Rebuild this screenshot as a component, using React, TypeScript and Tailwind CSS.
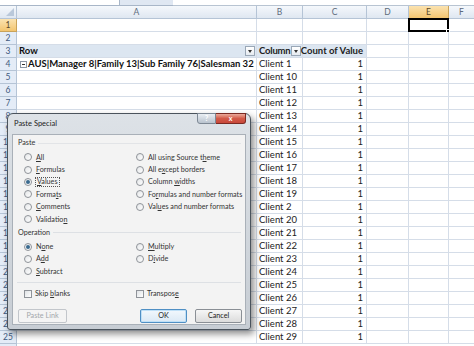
import React from "react";

const clients = ["1","10","11","12","13","14","15","16","17","18","19","2","20","21","22","23","24","25","26","27","28","29"];

function HeaderCell({ label, w, sel }: { label: string; w: string; sel?: boolean }) {
  return (
    <div
      className={`${w} h-full shrink-0 border-r border-b flex items-center justify-center text-[8.5px] leading-none ${
        sel
          ? "bg-gradient-to-b from-[#fbe3b0] to-[#f3c56f] border-[#c9a35a] text-[#5a4a2a]"
          : "bg-gradient-to-b from-[#f5f8fc] to-[#dfe7f1] border-[#b5c4d6] text-[#5d6b7c]"
      }`}
    >
      {label}
    </div>
  );
}

function DropBtn() {
  return (
    <div className="ml-auto mr-[1px] w-[10px] h-[10px] shrink-0 border border-[#9aa7b6] bg-gradient-to-b from-white to-[#e6ebf1] flex items-center justify-center">
      <div className="w-0 h-0 border-l-[2.5px] border-r-[2.5px] border-t-[3px] border-l-transparent border-r-transparent border-t-[#333]" />
    </div>
  );
}

function Row({ n }: { n: number }) {
  const isHdr = n === 3;
  const ci = n - 4;
  const client = ci >= 0 && ci < clients.length ? "Client " + clients[ci] : "";
  const bandA = isHdr ? "bg-[#dce6f1]" : "bg-white";
  return (
    <div className="flex h-[13px] shrink-0">
      <div
        className={`w-[17px] shrink-0 h-full border-r border-b flex items-center justify-center text-[8.5px] leading-none ${
          n === 1
            ? "bg-gradient-to-b from-[#fbe3b0] to-[#f3c56f] border-[#c9a35a] text-[#5a4a2a]"
            : "bg-[#e4ecf7] border-[#b5c4d6] text-[#3f5a80]"
        }`}
      >
        {n}
      </div>
      <div className={`w-[240px] shrink-0 h-full border-r border-b border-[#d5dde8] ${bandA} flex items-center pl-[2px] text-[9.5px] leading-none text-[#111]`}>
        {isHdr && (
          <>
            <span className="font-bold">Row</span>
            <DropBtn />
          </>
        )}
        {n === 4 && (
          <>
            <span className="w-[7px] h-[7px] border border-[#8c97a5] bg-white flex items-center justify-center mr-[1px] ml-[1px] shrink-0">
              <span className="w-[3px] h-[1px] bg-[#333]" />
            </span>
            <span className="font-bold whitespace-nowrap">AUS|Manager 8|Family 13|Sub Family 76|Salesman 32</span>
          </>
        )}
      </div>
      <div className={`w-[46px] shrink-0 h-full border-r border-b border-[#d5dde8] ${bandA} flex items-center pl-[2px] text-[9.5px] leading-none text-[#222] whitespace-nowrap`}>
        {isHdr ? (
          <>
            <span className="font-bold tracking-[-0.2px]">Column</span>
            <DropBtn />
          </>
        ) : (
          client
        )}
      </div>
      <div className={`w-[64px] shrink-0 h-full border-r border-b border-[#d5dde8] ${bandA} flex items-center justify-end pr-[3px] pl-[2px] text-[9.5px] leading-none text-[#222] whitespace-nowrap`}>
        {isHdr ? <span className="font-bold mr-auto">Count of Value</span> : client ? "1" : ""}
      </div>
      <div className="w-[42px] shrink-0 h-full border-r border-b border-[#d5dde8] bg-white" />
      <div className="w-[40px] shrink-0 h-full border-r border-b border-[#d5dde8] bg-white relative">
        {n === 1 && (
          <div className="absolute -left-[1px] -top-[1px] w-[41px] h-[14px] border-2 border-black">
            <div className="absolute -right-[3px] -bottom-[3px] w-[4px] h-[4px] bg-black border border-white" />
          </div>
        )}
      </div>
      <div className="flex-1 h-full border-b border-[#d5dde8] bg-white" />
    </div>
  );
}

function Radio({ sel }: { sel?: boolean }) {
  return (
    <span className="w-[8px] h-[8px] rounded-full border border-[#8f9399] bg-gradient-to-br from-[#e4e6e8] to-white flex items-center justify-center shrink-0">
      {sel && <span className="w-[4px] h-[4px] rounded-full bg-[#3a6a8e]" />}
    </span>
  );
}

function Opt({ sel, children, focus }: { sel?: boolean; children: React.ReactNode; focus?: boolean }) {
  return (
    <div className="flex items-center h-[12.4px] pl-[11px]">
      <Radio sel={sel} />
      <span className={`ml-[4px] whitespace-nowrap ${focus ? "outline outline-1 outline-dotted outline-[#555] px-[1px] -ml-[1px]" : ""}`}>{children}</span>
    </div>
  );
}

function Check({ children }: { children: React.ReactNode }) {
  return (
    <div className="flex items-center">
      <span className="w-[8px] h-[8px] border border-[#8f9399] bg-gradient-to-br from-[#dfe2e5] to-white shrink-0" />
      <span className="ml-[3px] whitespace-nowrap">{children}</span>
    </div>
  );
}

function Dialog() {
  return (
    <div className="absolute left-[7px] top-[113px] w-[244px] h-[217px] rounded-t-[6px] rounded-b-[3px] border border-[#4a535c] bg-gradient-to-b from-[#dde2e7] to-[#c7cdd4] shadow-[3px_4px_7px_rgba(0,0,0,0.45)] font-['Lato',sans-serif] text-[#333]">
      <div className="h-[20px] flex items-center pl-[6px] text-[7.5px] text-[#222]">Paste Special</div>
      <div className="absolute top-[-1px] right-[4px] flex">
        <div className="w-[19px] h-[11px] rounded-bl-[3px] border border-[#7d8894] bg-gradient-to-b from-[#e9eef3] to-[#b9c3ce] flex items-center justify-center text-[7px] text-white font-bold leading-none">?</div>
        <div className="w-[30px] h-[11px] rounded-br-[3px] border border-l-0 border-[#7a2a22] bg-gradient-to-b from-[#e9a99a] via-[#d25a48] to-[#c8473a] flex items-center justify-center text-[7px] text-white font-bold leading-none">x</div>
      </div>
      <div className="mx-[4px] h-[191px] border border-[#a9b0b8] bg-[#f3f3f3] flex flex-col text-[7.2px] leading-none">
        <div className="h-[16px] flex items-center pl-[5px] pr-[4px]">
          <span>Paste</span>
          <span className="flex-1 ml-[3px] h-px bg-[#e2e4e7]" />
        </div>
        <div className="flex">
          <div className="w-[112px] flex flex-col">
            <Opt><u>A</u>ll</Opt>
            <Opt><u>F</u>ormulas</Opt>
            <Opt sel focus><u>V</u>alues</Opt>
            <Opt>Forma<u>t</u>s</Opt>
            <Opt><u>C</u>omments</Opt>
            <Opt>Validatio<u>n</u></Opt>
          </div>
          <div className="flex flex-col">
            <Opt>All using Source t<u>h</u>eme</Opt>
            <Opt>All e<u>x</u>cept borders</Opt>
            <Opt>Column <u>w</u>idths</Opt>
            <Opt>Fo<u>r</u>mulas and number formats</Opt>
            <Opt>Val<u>u</u>es and number formats</Opt>
          </div>
        </div>
        <div className="h-[15px] flex items-center pl-[5px] pr-[4px]">
          <span>Operation</span>
          <span className="flex-1 ml-[3px] h-px bg-[#dde0e4]" />
        </div>
        <div className="flex">
          <div className="w-[112px] flex flex-col">
            <Opt sel>N<u>o</u>ne</Opt>
            <Opt>A<u>d</u>d</Opt>
            <Opt><u>S</u>ubtract</Opt>
          </div>
          <div className="flex flex-col">
            <Opt><u>M</u>ultiply</Opt>
            <Opt>D<u>i</u>vide</Opt>
          </div>
        </div>
        <div className="h-[10px] flex items-center px-[4px]">
          <span className="flex-1 h-px bg-[#dde0e4]" />
        </div>
        <div className="h-[12px] flex items-center">
          <div className="w-[123px] pl-[11px]">
            <Check>Skip <u>b</u>lanks</Check>
          </div>
          <Check>Transpos<u>e</u></Check>
        </div>
        <div className="mt-[9px] flex h-[14px]">
          <div className="ml-[5px] w-[49px] h-full rounded-[2px] border border-[#c2c6cb] bg-[#f4f4f4] flex items-center justify-center text-[#a3a7ab] whitespace-nowrap">
            Paste Link
          </div>
          <div className="ml-[73px] w-[47px] h-full rounded-[2px] border border-[#4f8fc4] bg-gradient-to-b from-[#f2f8fd] to-[#dbe9f5] flex items-center justify-center text-[#222] shadow-[inset_0_0_0_1px_#bfe0f7]">
            OK
          </div>
          <div className="ml-[8px] w-[47px] h-full rounded-[2px] border border-[#8a8f95] bg-gradient-to-b from-[#f6f6f6] to-[#dcdcdc] flex items-center justify-center text-[#222]">
            Cancel
          </div>
        </div>
      </div>
    </div>
  );
}

export default function App() {
  const rows = Array.from({ length: 25 }, (_, i) => i + 1);
  return (
    <div className="w-[474px] h-[346px] overflow-hidden relative bg-white font-['Lato',sans-serif]">
      <div className="flex h-[6px]">
        <div className="w-[120px] h-full border-b border-r border-[#a8b6c8] bg-white" />
        <div className="w-[53px] h-full border-b border-[#a8b6c8] bg-[#dfe7f2]" />
        <div className="flex-1 h-full border-b border-[#b8c4d2] bg-white" />
      </div>
      <div className="flex h-[13px]">
        <div className="w-[17px] shrink-0 h-full border-r border-b border-[#b5c4d6] bg-gradient-to-b from-[#f5f8fc] to-[#dfe7f1] flex items-end justify-end p-[2px]">
          <svg width="8" height="8" viewBox="0 0 8 8">
            <polygon points="8,0 8,8 0,8" fill="#b9c8da" />
          </svg>
        </div>
        <HeaderCell label="A" w="w-[240px]" />
        <HeaderCell label="B" w="w-[46px]" />
        <HeaderCell label="C" w="w-[64px]" />
        <HeaderCell label="D" w="w-[42px]" />
        <HeaderCell label="E" w="w-[40px]" sel />
        <div className="flex-1 h-full border-b border-[#b5c4d6] bg-gradient-to-b from-[#f5f8fc] to-[#dfe7f1] flex items-center justify-center text-[8.5px] text-[#5d6b7c] leading-none">F</div>
      </div>
      {rows.map((n) => (
        <Row key={n} n={n} />
      ))}
      <div className="flex h-[2px]">
        <div className="w-[17px] h-full border-r border-[#b5c4d6] bg-[#e4ecf7]" />
      </div>
      <Dialog />
    </div>
  );
}
